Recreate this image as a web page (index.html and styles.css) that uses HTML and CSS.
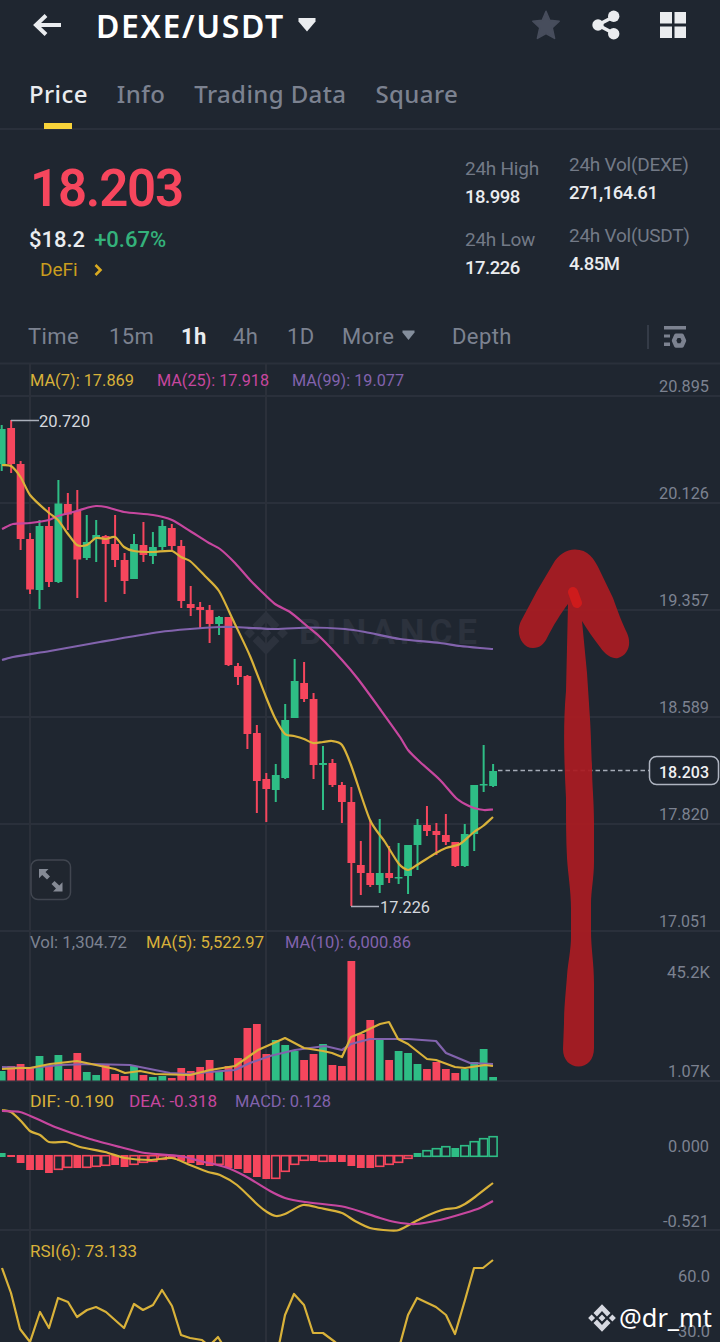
FILE: index.html
```
<!DOCTYPE html>
<html lang="en">
<head>
    <meta charset="UTF-8">
    <meta name="viewport" content="width=device-width, initial-scale=1.0">
    <title>DEXE/USDT</title>
    <link rel="stylesheet" href="styles.css">
</head>
<body>
    <header class="topbar">
        <svg class="back" width="30" height="24" viewBox="0 0 30 24"><path d="M14 2.5 L4 12 L14 21.5 M4 12 H29"/></svg>
        <h1>DEXE/USDT</h1>
        <svg class="caret" width="18" height="14" viewBox="0 0 18 14"><path d="M0.5 0 H17.5 V3.5 L9 13.5 L0.5 3.5 Z"/></svg>
        <div class="actions">
            <svg width="28" height="30" viewBox="0 0 28 30"><path fill="#474d5c" stroke="#474d5c" stroke-width="1.5" stroke-linejoin="round" d="M14 1.2 L17.8 10.3 L27.2 11.2 L20.3 17.8 L22.6 28.4 L14 23.6 L5.4 28.4 L7.7 17.8 L0.8 11.2 L10.2 10.3 Z"/></svg>
            <svg width="28" height="30" viewBox="0 0 28 30"><path fill="none" stroke="#eaecef" stroke-width="3.6" d="M22 6.5 L6 15 L22 23.5"/><g fill="#eaecef"><circle cx="21.7" cy="6.3" r="5.7"/><circle cx="6" cy="15" r="5.7"/><circle cx="21.7" cy="23.7" r="5.7"/></g></svg>
            <svg width="26" height="26" viewBox="0 0 26 26"><path fill="#eaecef" d="M0 0h12v11.5H0zM14.5 0h11.5v11.5h-11.5zM0 14.5h12V26H0zM14.5 14.5h11.5V26h-11.5z"/></svg>
        </div>
    </header>

    <nav class="tabs">
        <span class="active">Price</span>
        <span>Info</span>
        <span>Trading Data</span>
        <span>Square</span>
    </nav>

    <section class="summary">
        <div class="quote">
            <div class="last">18.203</div>
            <div class="fiat"><span>$18.2</span><span class="up">+0.67%</span></div>
            <div class="tag">DeFi <svg width="9" height="12" viewBox="0 0 9 12"><path d="M1.5 1 L6.5 6 L1.5 11"/></svg></div>
        </div>
        <dl class="stats">
            <dt>24h High</dt><dd>18.998</dd>
            <dt>24h Low</dt><dd>17.226</dd>
        </dl>
        <dl class="stats vol">
            <dt>24h Vol(DEXE)</dt><dd>271,164.61</dd>
            <dt>24h Vol(USDT)</dt><dd>4.85M</dd>
        </dl>
    </section>

    <nav class="intervals">
        <span>Time</span>
        <span>15m</span>
        <span class="active">1h</span>
        <span>4h</span>
        <span>1D</span>
        <span>More <svg width="13" height="11" viewBox="0 0 13 11"><path fill="#848e9c" d="M0.5 0.5 H12.5 V2.5 L6.5 10 L0.5 2.5 Z"/></svg></span>
        <span>Depth</span>
        <svg class="settings" width="24" height="24" viewBox="0 0 24 24">
            <path fill="#7c8290" d="M1 1h22v3.4H1zM1 9.5h6v3H1zM1 17.5h6v3.6H1z"/>
            <path fill="none" stroke="#7c8290" stroke-width="4.4" stroke-linejoin="round" d="M13.2 10.7 H18.8 L21 15.6 L18.800 20.500 H13.200 L11 15.600 Z"/>
        </svg>
    </nav>

    <main>
        <svg id="chart" width="720" height="984" viewBox="0 358 720 984"></svg>
    </main>

    <script src="chart.js"></script>
</body>
</html>
```
FILE: styles.css
```
* {
    box-sizing: border-box;
}
body {
    margin: 0;
    width: 720px;
    height: 1342px;
    overflow: hidden;
    background-color: #1f2630;
    color: #eaecef;
    font-family: Roboto, "Liberation Sans", sans-serif;
}
.topbar {
    display: flex;
    align-items: center;
    height: 50px;
    padding: 0 34px 0 32px;
}
.back path {
    fill: none;
    stroke: #eaecef;
    stroke-width: 4;
}
h1 {
    margin: 1px 0 0 34px;
    width: 189px;
    font-family: "Noto Sans", sans-serif;
    font-size: 32px;
    line-height: 40px;
    font-weight: 600;
    letter-spacing: 1.6px;
    white-space: nowrap;
    color: #fff;
}
.caret {
    margin-left: 13px;
    fill: #eaecef;
}
.actions {
    display: flex;
    align-items: center;
    margin-left: auto;
}
.actions svg:nth-child(2) {
    margin: 0 40px 0 32px;
}
.tabs {
    display: flex;
    gap: 29px;
    height: 80px;
    padding: 26px 0 0 29px;
    border-bottom: 2px solid #2a303b;
    font-family: "Noto Sans", sans-serif;
    font-size: 24px;
    line-height: 36px;
    font-weight: 500;
    letter-spacing: 0.4px;
    color: #7c8290;
}
.tabs .active {
    position: relative;
    color: #eaecef;
}
.tabs .active::after {
    content: "";
    position: absolute;
    left: 15px;
    top: 47px;
    width: 28px;
    height: 6px;
    background-color: #f8d33a;
}
.summary {
    display: grid;
    grid-template-columns: 436px 104px 150px;
    height: 178px;
    padding: 22px 0 0 29px;
}
.last {
    height: 73px;
    padding-left: 1px;
    font-size: 51px;
    line-height: 74px;
    font-weight: 600;
    letter-spacing: -1.2px;
    color: #f6465d;
}
.fiat {
    display: flex;
    gap: 9px;
    font-size: 22px;
    line-height: 30px;
    font-weight: 500;
}
.up {
    color: #34b27b;
}
.tag {
    padding-left: 11px;
    font-size: 19px;
    line-height: 29px;
    color: #c99d1e;
}
.tag svg {
    margin-left: 12px;
    fill: none;
    stroke: #d9aa21;
    stroke-width: 2.6;
}
.stats {
    margin: 3px 0 0;
    font-size: 19px;
    line-height: 28px;
    letter-spacing: -0.25px;
    white-space: nowrap;
}
.stats.vol {
    margin-top: -1px;
}
.stats dt {
    color: #737a87;
}
.stats dd {
    margin: 0 0 15px;
    font-weight: 500;
    font-size: 18.5px;
    letter-spacing: -0.5px;
}
.intervals {
    display: grid;
    grid-template-columns: 81px 72px 52px 54px 55px 110px 195px 40px;
    align-items: center;
    height: 50px;
    padding: 7px 0 0 28px;
    font-size: 22px;
    line-height: 40px;
    letter-spacing: 0.4px;
    color: #7c8290;
}
.intervals .active {
    font-weight: 700;
    color: #eaecef;
}
.intervals span svg {
    margin: 0 0 3px 2px;
}
.settings {
    box-sizing: content-box;
    padding-left: 14px;
    border-left: 2px solid #343b47;
}
main {
    height: 984px;
}
#chart {
    display: block;
}
```
FILE: chart.js
```
const NS = "http://www.w3.org/2000/svg";
const chart = document.getElementById("chart");

const GREEN = "#2ebd85";
const RED = "#f6465d";
const YELLOW = "#d9b23a";
const PINK = "#c7479f";
const PURPLE = "#8263ad";
const GRAY = "#7c8290";

function add(tag, attrs, text) {
    const el = document.createElementNS(NS, tag);
    for (const key in attrs) el.setAttribute(key, attrs[key]);
    if (text) el.textContent = text;
    chart.appendChild(el);
    return el;
}

function label(text, x1, x2, y, fill, weight) {
    add("text", {
        x: x1, y: y, fill: fill, "font-size": 17, "font-weight": weight || 400,
        textLength: x2 - x1, lengthAdjust: "spacingAndGlyphs"
    }, text);
}

function line(points, color) {
    add("polyline", {
        points: points, fill: "none", stroke: color, "stroke-width": 2.2, "stroke-linejoin": "round"
    });
}

// same as line() but with rounded corners between the points
function curve(points, color) {
    const p = points.split(" ").map(s => s.split(",").map(Number));
    let d = `M${p[0]}`;
    for (let i = 0; i < p.length - 1; i++) {
        const a = p[i - 1] || p[i], b = p[i], c = p[i + 1], e = p[i + 2] || c;
        const w = (c[0] - b[0]) / 4;
        const s1 = (c[1] - a[1]) / (c[0] - a[0]);
        const s2 = (e[1] - b[1]) / (e[0] - b[0]);
        d += `C${b[0] + w} ${b[1] + w * s1} ${c[0] - w} ${c[1] - w * s2} ${c[0]} ${c[1]}`;
    }
    add("path", { d: d, fill: "none", stroke: color, "stroke-width": 2.2 });
}

// centre of the nth candle
function cx(i) {
    return 1.7 + i * 9.45;
}

// grid
for (const y of [363.5, 396, 503, 610, 717, 824, 931, 1081, 1230]) {
    add("path", { d: `M0 ${y}H720`, stroke: "#2a303b", "stroke-width": 2 });
}
for (const x of [30, 266]) {
    add("path", { d: `M${x} 363V1342`, stroke: "#2b303a", "stroke-width": 2 });
}

// watermark
const diamond = "M-22 0l5.5-5.5L-11 0l-5.5 5.5zM22 0l-5.5-5.5L11 0l5.5 5.5zM0-5.5L5.5 0 0 5.5-5.5 0zM-13.5-8L0-22 13.5-8 8-2.5 0-11-8-2.5zM-13.5 8L0 22 13.5 8 8 2.5 0 11-8 2.5z";
add("path", { d: diamond, fill: "#2c323d", transform: "translate(266 633)" });
add("text", {
    x: 299, y: 644, fill: "#2c323d", "font-size": 35, "font-weight": 700,
    textLength: 178, lengthAdjust: "spacing"
}, "BINANCE");

// colour, wick top, body top, body bottom, wick bottom, volume top
const candles = [
    ["g", 425, 429, 464, 471, 1071], ["r", 420, 428, 464, 473, 1066], ["r", 461, 464, 539, 550, 1064],
    ["r", 533, 539, 589.5, 594, 1067], ["g", 520, 526, 590, 609, 1056], ["r", 507, 526, 582, 587, 1066],
    ["g", 480, 503.5, 582, 583, 1055], ["r", 493, 504, 514.5, 530, 1069], ["r", 490, 511, 559.5, 598, 1053],
    ["g", 515, 542, 558, 560, 1072], ["g", 520, 535, 539, 562, 1075], ["r", 535, 536, 544, 602, 1065],
    ["r", 515, 544, 560, 567, 1074], ["r", 553, 560, 581, 594, 1076], ["g", 534, 544, 579, 579, 1066],
    ["r", 522, 545, 555, 562, 1075], ["g", 532, 547, 556, 564, 1077], ["g", 520, 526, 547, 550, 1076],
    ["r", 524, 528, 546, 552, 1078], ["r", 540, 546, 601, 608, 1068], ["r", 586, 604, 608, 616, 1071],
    ["r", 602, 607, 610, 628, 1067], ["r", 605, 610, 624, 643, 1060], ["g", 616, 617, 624, 635, 1071],
    ["r", 617, 617, 665, 666, 1066], ["r", 663, 666, 677, 685, 1058], ["r", 675, 676, 734, 749, 1028],
    ["r", 725, 733, 781, 813, 1024], ["r", 773, 779, 789, 822, 1054], ["g", 764, 775, 790, 802, 1040],
    ["g", 704, 720, 778, 779, 1045], ["g", 659, 681, 718, 718, 1051], ["r", 662, 683, 699, 702, 1060],
    ["r", 693, 699, 765, 779, 1054], ["g", 746, 763, 765, 810, 1044], ["r", 759, 763, 785, 787, 1065],
    ["r", 782, 785, 802, 823, 1066], ["r", 787, 802, 863, 906, 961], ["r", 841, 865, 873, 895, 1034],
    ["r", 820, 873, 885, 887, 1020], ["g", 819, 873, 885, 893, 1039], ["r", 846, 873, 878, 883, 1060],
    ["g", 843, 877, 878.5, 884, 1051], ["g", 845, 845, 876, 894, 1053], ["g", 819, 825, 845, 870, 1064],
    ["r", 806, 825, 831, 836, 1069], ["r", 823, 831, 835, 855, 1062], ["r", 814, 835, 842, 845, 1069],
    ["r", 842, 842, 866, 867, 1073], ["g", 824, 834, 866, 867, 1069], ["g", 785, 785, 834, 851, 1062],
    ["g", 745, 784, 785.5, 792, 1049], ["g", 764, 771, 786, 787, 1077]
];

candles.forEach(function (c, i) {
    const color = c[0] == "g" ? GREEN : RED;
    add("rect", { x: cx(i) - 1, y: c[1], width: 2, height: c[4] - c[1], fill: color });
    add("rect", { x: cx(i) - 3.9, y: c[2], width: 7.8, height: c[3] - c[2], fill: color });
    add("rect", { x: cx(i) - 3.9, y: c[5], width: 7.8, height: 1080.5 - c[5], fill: color });
});

// moving averages
curve("2,660 13,657 50,651 100,642 160,632 190,629 220,627 233,627 275,629 310,627.5 345,629 365,632 400,639 440,643 460,646 480,648 493,649", PURPLE);
curve("2,529 13,524 30,523 49,520 58,516 77,511 88,507.5 96,506 106,507 124,512 153,515 172,520 190,531 209,543 220,549 235,563 250,580 260,590 275,604 290,612 307,626 320,637 342,660 358,679 380,709 400,737 408,750 420,762 440,780 456,798 465,804 474,808 484,810 493,809.5", PINK);
curve("2,465 11,466 20.5,477 30,495 49,513 58,520 68,534 77,545 87,545 96,538 106,539 115,537 124,547 134,551 153,552 172,551 181,557 190,561 205,576 219,591 233,620 250,656 266,697 275,718 285,734 294,736 304,739 313,743 323,742 332,741 342,745 351,765 370,820 385,842 399,864 408,870 417,865 436,853 446,848 460,844 474,832 483,826 493,817", YELLOW);

// volume averages
line("2,1067 30,1068 60,1065 90,1064 130,1065 150,1069 170,1073 190,1074 210,1072 235,1070 250,1063 270,1056 295,1050 325,1046 342,1050 351,1044 370,1039 408,1039 436,1041 446,1053 470,1063 493,1064", PURPLE);
line("2,1069 20,1068 30,1068 50,1064 77,1061 96,1065 115,1069 125,1073 140,1071 155,1074 190,1075 210,1070 235,1066 248,1057 258,1050 285,1038 304,1048 323,1051 332,1053 342,1057 351,1037 361,1033 380,1024 389,1022 398,1039 408,1044 427,1059 436,1060 455,1067 465,1068 485,1065 493,1066", YELLOW);

// macd bars, h = hollow
const macd = [
    "1153", "1157", "1163", "1170", "1170", "1173", "1170h", "1168h", "1168", "1168h", "1167h", "1166h", "1165",
    "1167", "1165h", "1163h", "1162h", "1160h", "1159", "1161", "1163", "1165", "1166", "1165h", "1168", "1169",
    "1173", "1177", "1179", "1179h", "1172h", "1165h", "1161h", "1161", "1162h", "1162", "1162", "1166", "1168",
    "1168", "1167h", "1165h", "1163h", "1159h", "1153", "1150h", "1148h", "1146h", "1148", "1145h", "1141h",
    "1138h", "1136h"
];
macd.forEach(function (m, i) {
    const y = parseInt(m);
    const top = Math.min(y, 1155);
    const bottom = y < 1155 ? 1157 : y;
    const color = y < 1155 ? GREEN : RED;
    const hollow = m.endsWith("h");
    add("rect", {
        x: cx(i) - (hollow ? 4 : 3.9), y: hollow ? top + 0.7 : top,
        width: hollow ? 8 : 7.8, height: Math.max(bottom - top - (hollow ? 1.4 : 0), 1),
        fill: hollow ? "none" : color, stroke: hollow ? color : "none", "stroke-width": 1.6
    });
});
curve("2,1110 11,1112 21,1121 30,1131 40,1135 49,1142 66,1142 80,1147 105,1152 125,1158 150,1160 172,1158 190,1165 208,1172 220,1175 237,1185 258,1205 267,1212 276,1216 285,1214 303,1205 320,1208 342,1213 355,1221 370,1228 390,1230.5 399,1230 420,1219 436,1212 446,1209 456,1208 465,1204 475,1197 493,1183", YELLOW);
curve("2,1111 20,1112 35,1118 55,1127 90,1139 120,1147 145,1153 180,1156 200,1161 225,1167 245,1176 270,1191 285,1198 305,1202 345,1207 380,1218 395,1222 415,1224 440,1220 465,1213 480,1208 493,1201", PINK);

// rsi
line("2,1268 11,1293 20,1329 30,1342 40,1312 49,1328 58,1298 68,1302 77,1317 87,1310 96,1307 106,1312 124,1328 134,1304 143,1310 153,1305 162,1290 172,1306 181,1335 190,1338 202,1340 209,1346 218,1337 226,1350", YELLOW);
line("278,1350 285,1315 294,1294 304,1305 313,1333 323,1333 335,1342 345,1350", YELLOW);
line("399,1348 408,1315 417,1298 436,1307 446,1315 455,1334 465,1300 474,1268 483,1268 493,1260", YELLOW);

// legends
label("MA(7): 17.869", 30, 134, 386, YELLOW);
label("MA(25): 17.918", 157, 269, 386, PINK);
label("MA(99): 19.077", 292, 404, 386, PURPLE);
label("Vol: 1,304.72", 30, 127, 948, GRAY);
label("MA(5): 5,522.97", 146, 264, 948, YELLOW);
label("MA(10): 6,000.86", 285, 411, 948, PURPLE);
label("DIF: -0.190", 30, 114, 1107, YELLOW);
label("DEA: -0.318", 129, 217, 1107, PINK);
label("MACD: 0.128", 235, 331, 1107, PURPLE);
label("RSI(6): 73.133", 30, 137, 1257, YELLOW);

// high and low markers
add("path", { d: "M11 420.5H39M351 906.5H379", stroke: "#aab0bb", "stroke-width": 1.5 });
label("20.720", 39, 90, 427, "#d5d8de");
label("17.226", 380, 430, 913, "#d5d8de");

// axis
label("20.895", 659, 709, 392, GRAY);
label("20.126", 659, 709, 499, GRAY);
label("19.357", 659, 709, 606, GRAY);
label("18.589", 659, 709, 713, GRAY);
label("17.820", 659, 709, 820, GRAY);
label("17.051", 659, 708, 927, GRAY);
label("45.2K", 667, 710, 978, GRAY);
label("1.07K", 668, 710, 1077, GRAY);
label("0.000", 668, 709, 1152, GRAY);
label("-0.521", 663, 709, 1227, GRAY);
label("60.0", 678, 710, 1282, GRAY);
label("30.0", 678, 710, 1337, GRAY);

// current price
add("path", { d: "M498 770.5H649", stroke: "#a5abb6", "stroke-width": 1.4, "stroke-dasharray": "4.5 3" });
add("rect", { x: 649.5, y: 756.5, width: 69, height: 28, rx: 7, fill: "#1f2630", stroke: "#aeb4c0", "stroke-width": 1.5 });
label("18.203", 659, 709, 778, "#f0f1f3", 500);

// fullscreen button
add("rect", { x: 31, y: 860, width: 39.5, height: 39.5, rx: 7, fill: "#20262f", stroke: "#414650", "stroke-width": 1.5 });
add("path", { d: "M39 869H48.5L45.5 872L50 876.5L47 879.5L42.2 875L39 878.2ZM62.5 891.5H53L56 888.5L51.5 884L54.5 881L59.3 885.5L62.5 882.3Z", fill: "#858a95" });

// hand drawn arrow
add("path", {
    fill: "#a91c22", opacity: 0.94,
    d: "M575 549.5C566 549.5 558 555 553 564L537 591L521 621C515 633 522 648 533 648C540 648 544 644 547 638C553 626 561 613 568 604L566 691C563 725 564 760 566 798C566 820 566 840 567 858C568 875 571 890 571 909V937C571 950 568 962 567 976C566 990 564 1008 564 1023L563 1049C563 1060 570 1066.5 578.5 1066.5C587 1066.5 594 1060 594 1048V984C594 962 591 950 591 930V905C591 890 594 878 594 862V823C594 800 592 785 592 766C591 740 591 735 590 719L587 673L582 621C587 629 593 638 600 647C606 656 613 659 618 658C628 655 632 644 627 633C622 623 617 609 613 598L600 571C594 558 588 549.5 575 549.5Z"
});
add("path", { d: "M573 592L577 603", stroke: "#da1b1b", "stroke-width": 10, "stroke-linecap": "round", opacity: 0.8 });

// author handle
add("path", { d: diamond, fill: "#d6d8e0", transform: "translate(602 1318) scale(0.63)" });
add("text", {
    x: 619, y: 1327, fill: "#fff", "font-size": 25, "font-family": "Noto Sans",
    textLength: 93, lengthAdjust: "spacingAndGlyphs"
}, "@dr_mt");
```
